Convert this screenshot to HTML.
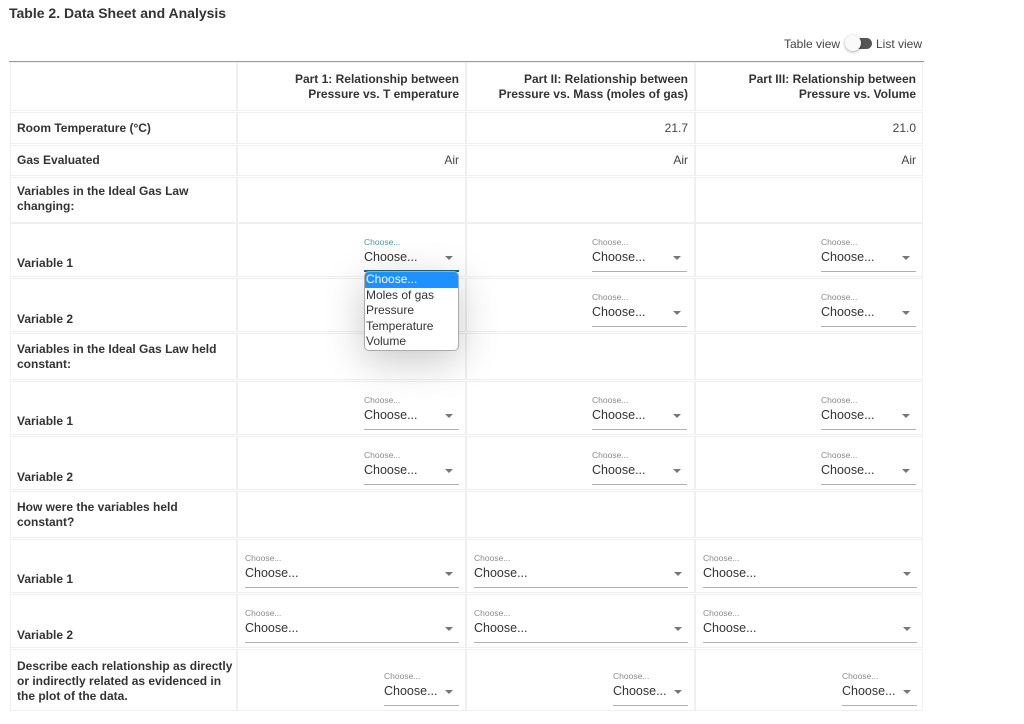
<!DOCTYPE html>
<html><head><meta charset="utf-8"><style>
body{margin:0;width:1024px;height:724px;background:#fff;font-family:"Liberation Sans",Arial,sans-serif;color:#333;position:relative;overflow:hidden}
.c{position:absolute;background:#fff;box-shadow:0 0 0 1px #efefef;box-sizing:border-box}
.t{position:absolute;font-size:12px;font-weight:bold;color:#333;line-height:15px}
.r{position:absolute;font-size:12px;color:#444;text-align:right}
.s{position:absolute;height:37px;border-bottom:1px solid #b0b0b0;box-sizing:content-box}
.s .l{position:absolute;left:0;top:3px;font-size:8.5px;line-height:10px;color:#8a8a8a}
.s .v{position:absolute;left:0;top:15px;font-size:12.5px;line-height:16px;color:#333}
.s .a{position:absolute;right:6px;top:22px;width:0;height:0;border-left:4px solid transparent;border-right:4px solid transparent;border-top:4px solid #777}
.w95{width:95px}.w214{width:214px}.w75{width:75px}
</style></head><body>
<div style="position:absolute;left:9px;top:5px;font-size:14px;font-weight:bold;color:#333">Table 2. Data Sheet and Analysis</div>
<div style="position:absolute;left:784px;top:37px;font-size:12px;color:#444">Table view</div>
<div style="position:absolute;left:848px;top:38px;width:24px;height:11px;border-radius:6px;background:#555"></div>
<div style="position:absolute;left:845px;top:35px;width:16px;height:16px;border-radius:50%;background:#fafafa;box-shadow:0 1px 3px rgba(0,0,0,.35)"></div>
<div style="position:absolute;left:876px;top:37px;font-size:12px;color:#444">List view</div>
<div style="position:absolute;left:9px;top:61px;width:915px;height:1px;background:#999"></div>

<div class="c" style="left:11px;top:63px;width:225px;height:47px"></div><div class="c" style="left:238px;top:63px;width:227px;height:47px"></div><div class="c" style="left:467px;top:63px;width:227px;height:47px"></div><div class="c" style="left:696px;top:63px;width:226px;height:47px"></div>
<div class="c" style="left:11px;top:113px;width:225px;height:30px"></div><div class="c" style="left:238px;top:113px;width:227px;height:30px"></div><div class="c" style="left:467px;top:113px;width:227px;height:30px"></div><div class="c" style="left:696px;top:113px;width:226px;height:30px"></div>
<div class="c" style="left:11px;top:146px;width:225px;height:29px"></div><div class="c" style="left:238px;top:146px;width:227px;height:29px"></div><div class="c" style="left:467px;top:146px;width:227px;height:29px"></div><div class="c" style="left:696px;top:146px;width:226px;height:29px"></div>
<div class="c" style="left:11px;top:178px;width:225px;height:44px"></div><div class="c" style="left:238px;top:178px;width:227px;height:44px"></div><div class="c" style="left:467px;top:178px;width:227px;height:44px"></div><div class="c" style="left:696px;top:178px;width:226px;height:44px"></div>
<div class="c" style="left:11px;top:224px;width:225px;height:52px"></div><div class="c" style="left:238px;top:224px;width:227px;height:52px"></div><div class="c" style="left:467px;top:224px;width:227px;height:52px"></div><div class="c" style="left:696px;top:224px;width:226px;height:52px"></div>
<div class="c" style="left:11px;top:279px;width:225px;height:52px"></div><div class="c" style="left:238px;top:279px;width:227px;height:52px"></div><div class="c" style="left:467px;top:279px;width:227px;height:52px"></div><div class="c" style="left:696px;top:279px;width:226px;height:52px"></div>
<div class="c" style="left:11px;top:334px;width:225px;height:45px"></div><div class="c" style="left:238px;top:334px;width:227px;height:45px"></div><div class="c" style="left:467px;top:334px;width:227px;height:45px"></div><div class="c" style="left:696px;top:334px;width:226px;height:45px"></div>
<div class="c" style="left:11px;top:382px;width:225px;height:52px"></div><div class="c" style="left:238px;top:382px;width:227px;height:52px"></div><div class="c" style="left:467px;top:382px;width:227px;height:52px"></div><div class="c" style="left:696px;top:382px;width:226px;height:52px"></div>
<div class="c" style="left:11px;top:437px;width:225px;height:52px"></div><div class="c" style="left:238px;top:437px;width:227px;height:52px"></div><div class="c" style="left:467px;top:437px;width:227px;height:52px"></div><div class="c" style="left:696px;top:437px;width:226px;height:52px"></div>
<div class="c" style="left:11px;top:492px;width:225px;height:45px"></div><div class="c" style="left:238px;top:492px;width:227px;height:45px"></div><div class="c" style="left:467px;top:492px;width:227px;height:45px"></div><div class="c" style="left:696px;top:492px;width:226px;height:45px"></div>
<div class="c" style="left:11px;top:540px;width:225px;height:52px"></div><div class="c" style="left:238px;top:540px;width:227px;height:52px"></div><div class="c" style="left:467px;top:540px;width:227px;height:52px"></div><div class="c" style="left:696px;top:540px;width:226px;height:52px"></div>
<div class="c" style="left:11px;top:595px;width:225px;height:52px"></div><div class="c" style="left:238px;top:595px;width:227px;height:52px"></div><div class="c" style="left:467px;top:595px;width:227px;height:52px"></div><div class="c" style="left:696px;top:595px;width:226px;height:52px"></div>
<div class="c" style="left:11px;top:650px;width:225px;height:60px"></div><div class="c" style="left:238px;top:650px;width:227px;height:60px"></div><div class="c" style="left:467px;top:650px;width:227px;height:60px"></div><div class="c" style="left:696px;top:650px;width:226px;height:60px"></div>

<div class="t" style="left:240px;width:219px;top:72px;text-align:right">Part 1: Relationship between<br>Pressure vs. T emperature</div>
<div class="t" style="left:469px;width:219px;top:72px;text-align:right">Part II: Relationship between<br>Pressure vs. Mass (moles of gas)</div>
<div class="t" style="left:698px;width:218px;top:72px;text-align:right">Part III: Relationship between<br>Pressure vs. Volume</div>

<div class="t" style="left:17px;top:121px">Room Temperature (°C)</div>
<div class="r" style="left:600px;width:88px;top:121px">21.7</div>
<div class="r" style="left:830px;width:86px;top:121px">21.0</div>
<div class="t" style="left:17px;top:153px">Gas Evaluated</div>
<div class="r" style="left:400px;width:59px;top:153px">Air</div>
<div class="r" style="left:600px;width:88px;top:153px">Air</div>
<div class="r" style="left:830px;width:86px;top:153px">Air</div>
<div class="t" style="left:17px;top:184px">Variables in the Ideal Gas Law<br>changing:</div>
<div class="t" style="left:17px;top:256px">Variable 1</div>
<div class="t" style="left:17px;top:312px">Variable 2</div>
<div class="t" style="left:17px;top:342px">Variables in the Ideal Gas Law held<br>constant:</div>
<div class="t" style="left:17px;top:414px">Variable 1</div>
<div class="t" style="left:17px;top:470px">Variable 2</div>
<div class="t" style="left:17px;top:500px">How were the variables held<br>constant?</div>
<div class="t" style="left:17px;top:572px">Variable 1</div>
<div class="t" style="left:17px;top:628px">Variable 2</div>
<div class="t" style="left:17px;top:659px">Describe each relationship as directly<br>or indirectly related as evidenced in<br>the plot of the data.</div>

<div class="s w95" style="left:364px;top:234px;border-bottom:2px solid #0e6e82;height:36px"><div class="l" style="color:#4a9aa8">Choose...</div><div class="v">Choose...</div><div class="a"></div></div>
<div class="s w95" style="left:592px;top:234px"><div class="l">Choose...</div><div class="v">Choose...</div><div class="a"></div></div>
<div class="s w95" style="left:821px;top:234px"><div class="l">Choose...</div><div class="v">Choose...</div><div class="a"></div></div>
<div class="s w95" style="left:592px;top:289px"><div class="l">Choose...</div><div class="v">Choose...</div><div class="a"></div></div>
<div class="s w95" style="left:821px;top:289px"><div class="l">Choose...</div><div class="v">Choose...</div><div class="a"></div></div>
<div class="s w95" style="left:364px;top:392px"><div class="l">Choose...</div><div class="v">Choose...</div><div class="a"></div></div>
<div class="s w95" style="left:592px;top:392px"><div class="l">Choose...</div><div class="v">Choose...</div><div class="a"></div></div>
<div class="s w95" style="left:821px;top:392px"><div class="l">Choose...</div><div class="v">Choose...</div><div class="a"></div></div>
<div class="s w95" style="left:364px;top:447px"><div class="l">Choose...</div><div class="v">Choose...</div><div class="a"></div></div>
<div class="s w95" style="left:592px;top:447px"><div class="l">Choose...</div><div class="v">Choose...</div><div class="a"></div></div>
<div class="s w95" style="left:821px;top:447px"><div class="l">Choose...</div><div class="v">Choose...</div><div class="a"></div></div>
<div class="s w214" style="left:245px;top:550px"><div class="l">Choose...</div><div class="v">Choose...</div><div class="a"></div></div>
<div class="s w214" style="left:474px;top:550px"><div class="l">Choose...</div><div class="v">Choose...</div><div class="a"></div></div>
<div class="s w214" style="left:703px;top:550px"><div class="l">Choose...</div><div class="v">Choose...</div><div class="a"></div></div>
<div class="s w214" style="left:245px;top:605px"><div class="l">Choose...</div><div class="v">Choose...</div><div class="a"></div></div>
<div class="s w214" style="left:474px;top:605px"><div class="l">Choose...</div><div class="v">Choose...</div><div class="a"></div></div>
<div class="s w214" style="left:703px;top:605px"><div class="l">Choose...</div><div class="v">Choose...</div><div class="a"></div></div>
<div class="s w75" style="left:384px;top:668px"><div class="l">Choose...</div><div class="v">Choose...</div><div class="a"></div></div>
<div class="s w75" style="left:613px;top:668px"><div class="l">Choose...</div><div class="v">Choose...</div><div class="a"></div></div>
<div class="s w75" style="left:842px;top:668px"><div class="l">Choose...</div><div class="v">Choose...</div><div class="a"></div></div>

<div style="position:absolute;left:364px;top:271px;width:95px;height:80px;border:1px solid #aaa;border-radius:5px;background:#fff;box-shadow:0 10px 40px rgba(0,0,0,.22);box-sizing:border-box;overflow:hidden;font-size:12px;line-height:15.6px;color:#333">
<div style="background:#1e90ff;color:#fff;padding-left:1px">Choose...</div>
<div style="padding-left:1px">Moles of gas</div>
<div style="padding-left:1px">Pressure</div>
<div style="padding-left:1px">Temperature</div>
<div style="padding-left:1px">Volume</div>
</div>
</body></html>
